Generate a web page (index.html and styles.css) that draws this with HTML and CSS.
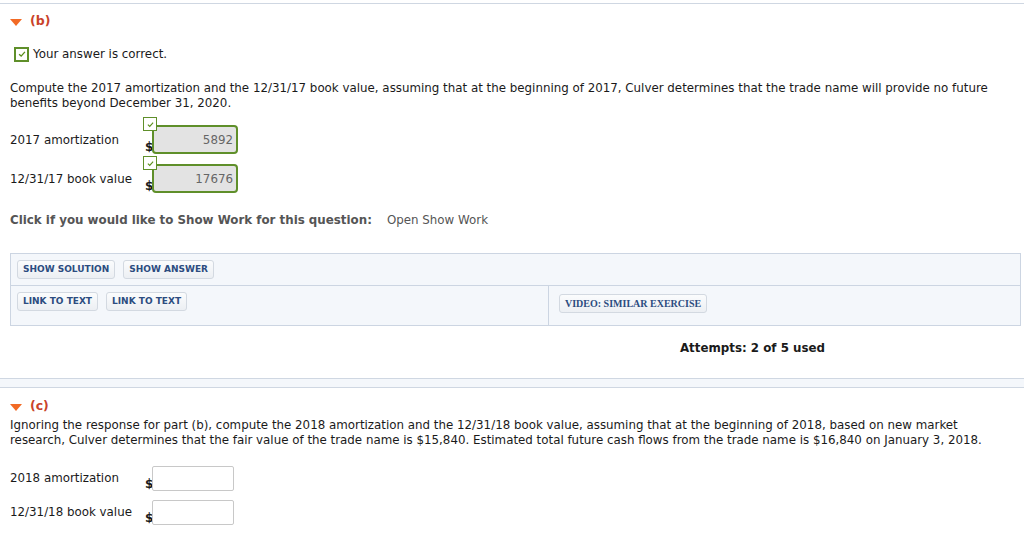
FILE: index.html
```html
<!DOCTYPE html>
<html>
<head>
<meta charset="utf-8">
<link rel="stylesheet" href="styles.css">
</head>
<body>
<div class="topline"></div>
<section class="part part-b">
  <div class="part-head"><span class="tri"></span><span class="part-label">(b)</span></div>
  <div class="correct">
    <span class="check big"><svg viewBox="0 0 12 12" width="10" height="10"><path d="M2.5 6.2 L5 8.5 L9.5 3.5" fill="none" stroke="#5a8f1c" stroke-width="1.6"/></svg></span>
    <span>Your answer is correct.</span>
  </div>
  <p class="question">Compute the 2017 amortization and the 12/31/17 book value, assuming that at the beginning of 2017, Culver determines that the trade name will provide no future benefits beyond December 31, 2020.</p>
  <div class="answers">
    <div class="arow filled">
      <span class="alabel">2017 amortization</span>
      <span class="dollar">$</span>
      <span class="field">
        <span class="check small"><svg viewBox="0 0 12 12" width="9" height="9"><path d="M2.5 6.2 L5 8.5 L9.5 3.5" fill="none" stroke="#5a8f1c" stroke-width="1.5"/></svg></span>
        <span class="box done">5892</span>
      </span>
    </div>
    <div class="arow filled">
      <span class="alabel">12/31/17 book value</span>
      <span class="dollar">$</span>
      <span class="field">
        <span class="check small"><svg viewBox="0 0 12 12" width="9" height="9"><path d="M2.5 6.2 L5 8.5 L9.5 3.5" fill="none" stroke="#5a8f1c" stroke-width="1.5"/></svg></span>
        <span class="box done">17676</span>
      </span>
    </div>
  </div>
  <div class="showwork"><b>Click if you would like to Show Work for this question:</b><span class="open">Open Show Work</span></div>
  <table class="tools">
    <tr class="r1"><td colspan="2"><span class="btn">SHOW SOLUTION</span><span class="btn">SHOW ANSWER</span></td></tr>
    <tr class="r2"><td class="left"><span class="btn">LINK TO TEXT</span><span class="btn">LINK TO TEXT</span></td><td class="right"><span class="btn video">VIDEO: SIMILAR EXERCISE</span></td></tr>
  </table>
  <div class="attempts">Attempts: 2 of 5 used</div>
</section>
<div class="divider"></div>
<section class="part part-c">
  <div class="part-head"><span class="tri"></span><span class="part-label">(c)</span></div>
  <p class="question q2">Ignoring the response for part (b), compute the 2018 amortization and the 12/31/18 book value, assuming that at the beginning of 2018, based on new market research, Culver determines that the fair value of the trade name is $15,840. Estimated total future cash flows from the trade name is $16,840 on January 3, 2018.</p>
  <div class="answers empty">
    <div class="arow">
      <span class="alabel">2018 amortization</span>
      <span class="dollar">$</span>
      <span class="box blank"></span>
    </div>
    <div class="arow">
      <span class="alabel">12/31/18 book value</span>
      <span class="dollar">$</span>
      <span class="box blank"></span>
    </div>
  </div>
</section>
</body>
</html>
```
FILE: styles.css
```css
html, body {
  margin: 0;
  padding: 0;
  background: #fff;
}
body {
  font-family: "DejaVu Sans", Verdana, sans-serif;
  font-size: 11.85px;
  line-height: 14px;
  color: #1a1a1a;
  width: 1024px;
  height: 535px;
  overflow: hidden;
}
.topline {
  margin-top: 3px;
  height: 1px;
  background: #cfd7e2;
}
.part {
  padding: 0 0 0 10px;
}
.part-head {
  display: flex;
  align-items: center;
  height: 16px;
  margin-top: 9px;
}
.tri {
  width: 0;
  height: 0;
  border-left: 6px solid transparent;
  border-right: 6px solid transparent;
  border-top: 7px solid #f26a25;
  margin-right: 8px;
  margin-top: 2px;
}
.part-label {
  font-weight: bold;
  color: #c9432a;
  font-size: 12.5px;
}
.correct {
  display: flex;
  align-items: center;
  margin-top: 18px;
  margin-left: 4px;
  height: 14px;
}
.check {
  display: inline-flex;
  align-items: center;
  justify-content: center;
  box-sizing: border-box;
  background: #fff;
  border: 2px solid #5f8f2a;
}
.check.big {
  width: 15px;
  height: 15px;
  margin-right: 4px;
}
.question {
  margin: 20px 0 0 0;
  line-height: 15px;
  width: 1000px;
}
.answers {
  margin-top: 9px;
}
.arow {
  display: flex;
  align-items: center;
}
.arow.filled {
  height: 39px;
}
.alabel {
  width: 135px;
}
.dollar {
  width: 7px;
  align-self: flex-end;
  font-weight: bold;
  font-size: 12px;
  line-height: 13px;
  margin-bottom: 5px;
}
.empty .dollar {
  margin-bottom: 4px;
}
.field {
  position: relative;
  display: block;
}
.check.small {
  position: absolute;
  left: -9px;
  top: -8px;
  width: 14px;
  height: 14px;
  border-width: 1px;
  border-color: #5f8f2a;
  z-index: 1;
}
.box {
  display: flex;
  align-items: center;
  justify-content: flex-end;
  box-sizing: border-box;
}
.box.done {
  width: 86px;
  height: 29px;
  background: #e3e3e3;
  border: 2px solid #5f8f2a;
  border-radius: 4px;
  padding-right: 3px;
  color: #666;
}
.showwork {
  margin-top: 15px;
  color: #555;
}
.open {
  margin-left: 15px;
  color: #555;
}
.tools {
  margin-top: 26px;
  width: 1011px;
  border-collapse: collapse;
  background: #f4f7fb;
}
.tools td {
  border: 1px solid #ccd5e2;
  padding: 6px 0 0 6px;
  vertical-align: top;
  box-sizing: border-box;
}
.tools .r1 td {
  height: 32px;
}
.tools .r2 td {
  height: 40px;
}
.tools td.left {
  width: 538px;
}
.tools td.right {
  padding-left: 10px;
}
.btn {
  display: inline-block;
  box-sizing: border-box;
  height: 19px;
  line-height: 17px;
  padding: 0 5px;
  margin-right: 8px;
  font-size: 9px;
  font-weight: bold;
  color: #2c4c80;
  background: linear-gradient(#fbfcfd, #eceff3);
  border: 1px solid #d3d9e1;
  border-radius: 3px;
}
.btn.video {
  font-family: "Liberation Serif", "Times New Roman", serif;
  font-size: 10px;
  margin-top: 2px;
}
.attempts {
  display: flex;
  justify-content: flex-end;
  padding-right: 199px;
  margin-top: 15px;
  font-weight: bold;
  line-height: 15px;
}
.divider {
  margin-top: 22px;
  height: 8px;
  border-top: 1px solid #cfd7e2;
  border-bottom: 1px solid #cfd7e2;
  background: #f4f7fb;
}
.part-c .part-head {
  margin-top: 10px;
}
.question.q2 {
  margin-top: 4px;
}
.answers.empty {
  margin-top: 13px;
}
.empty .arow {
  height: 34px;
}
.box.blank {
  width: 82px;
  height: 25px;
  background: #fff;
  border: 1px solid #c8c8c8;
  border-radius: 2px;
}
```
